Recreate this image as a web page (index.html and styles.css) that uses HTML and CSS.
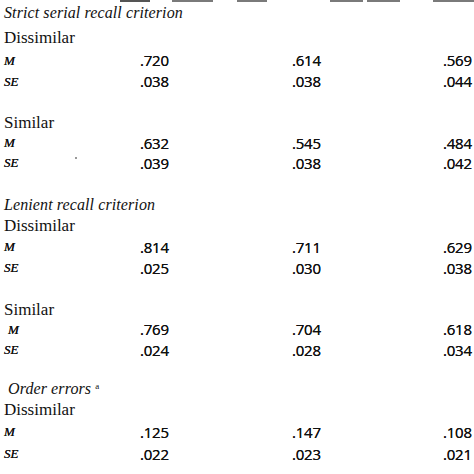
FILE: index.html
```html
<!DOCTYPE html>
<html>
<head>
<meta charset="utf-8">
<link rel="stylesheet" href="styles.css">
</head>
<body>
<div class="page">
  <div class="rule">
    <span class="seg s1"></span><span class="seg s2"></span><span class="seg s3"></span><span class="seg s4"></span><span class="seg s5"></span><span class="seg s6"></span>
  </div>
  <div class="table">
    <div class="row h26"><span class="head">Strict serial recall criterion</span></div>
    <div class="row h24"><span class="group">Dissimilar</span></div>
    <div class="row h21"><span class="stat">M</span><span class="num">.720</span><span class="num">.614</span><span class="num">.569</span></div>
    <div class="row h21"><span class="stat">SE</span><span class="num">.038</span><span class="num">.038</span><span class="num">.044</span></div>
    <div class="row h21"></div>
    <div class="row h20"><span class="group">Similar</span></div>
    <div class="row h20"><span class="stat">M</span><span class="num">.632</span><span class="num">.545</span><span class="num">.484</span></div>
    <div class="row h20"><span class="stat">SE<span class="speck"></span></span><span class="num">.039</span><span class="num">.038</span><span class="num">.042</span></div>
    <div class="row h21"></div>
    <div class="row h22"><span class="head">Lenient recall criterion</span></div>
    <div class="row h20"><span class="group">Dissimilar</span></div>
    <div class="row h22"><span class="stat">M</span><span class="num">.814</span><span class="num">.711</span><span class="num">.629</span></div>
    <div class="row h20"><span class="stat">SE</span><span class="num">.025</span><span class="num">.030</span><span class="num">.038</span></div>
    <div class="row h22"></div>
    <div class="row h20"><span class="group">Similar</span></div>
    <div class="row h19"><span class="stat ind">M</span><span class="num">.769</span><span class="num">.704</span><span class="num">.618</span></div>
    <div class="row h22"><span class="stat">SE</span><span class="num">.024</span><span class="num">.028</span><span class="num">.034</span></div>
    <div class="row h17"></div>
    <div class="row h22"><span class="head ind">Order errors <sup class="note">a</sup></span></div>
    <div class="row h20"><span class="group">Dissimilar</span></div>
    <div class="row h24"><span class="stat">M</span><span class="num">.125</span><span class="num">.147</span><span class="num">.108</span></div>
    <div class="row h20"><span class="stat">SE</span><span class="num">.022</span><span class="num">.023</span><span class="num">.021</span></div>
  </div>
</div>
</body>
</html>
```

FILE: styles.css
```css
html, body {
  margin: 0;
  padding: 0;
  background: #ffffff;
}

.page {
  width: 474px;
  height: 474px;
  overflow: hidden;
  position: relative;
  color: #111111;
}

.rule {
  position: absolute;
  top: 0;
  left: 0;
  width: 474px;
  height: 2px;
}

.seg {
  position: absolute;
  top: 0;
  height: 2px;
  background: #7a7a7a;
}
.s1 { left: 120px; width: 30px; background: #555; }
.s2 { left: 172px; width: 41px; }
.s3 { left: 237px; width: 30px; }
.s4 { left: 330px; width: 33px; }
.s5 { left: 367px; width: 33px; }
.s6 { left: 433px; width: 41px; }

.table {
  padding-left: 4px;
  display: flex;
  flex-direction: column;
}

.row {
  display: grid;
  grid-template-columns: 136px 152px 151px 40px;
  align-items: center;
  white-space: nowrap;
}

.h17 { height: 17px; line-height: 17px; }
.h19 { height: 19px; line-height: 19px; }
.h20 { height: 20px; line-height: 20px; }
.h21 { height: 21px; line-height: 21px; }
.h22 { height: 22px; line-height: 22px; }
.h24 { height: 24px; line-height: 24px; }
.h26 { height: 26px; line-height: 26px; }

.head {
  grid-column: 1 / 5;
  font-family: "Liberation Serif", "Times New Roman", serif;
  font-style: italic;
  font-size: 16px;
  letter-spacing: 0.1px;
}

.group {
  grid-column: 1 / 5;
  font-family: "Liberation Serif", "Times New Roman", serif;
  font-size: 17px;
}

.stat {
  font-family: "Liberation Serif", "Times New Roman", serif;
  font-style: italic;
  font-size: 13px;
  position: relative;
  text-shadow: 0 0 0.4px #111;
}

.ind {
  padding-left: 4px;
}

.num {
  font-family: "Open Sans", "Liberation Sans", Arial, sans-serif;
  font-size: 15px;
  font-weight: 500;
  letter-spacing: -0.2px;
  text-shadow: 0 0 0.3px #111;
}

.note {
  font-size: 9px;
  font-style: normal;
  vertical-align: 5px;
  line-height: 0;
}

.speck {
  position: absolute;
  left: 71px;
  top: 4px;
  width: 2px;
  height: 2px;
  background: #777;
  border-radius: 1px;
}
```
